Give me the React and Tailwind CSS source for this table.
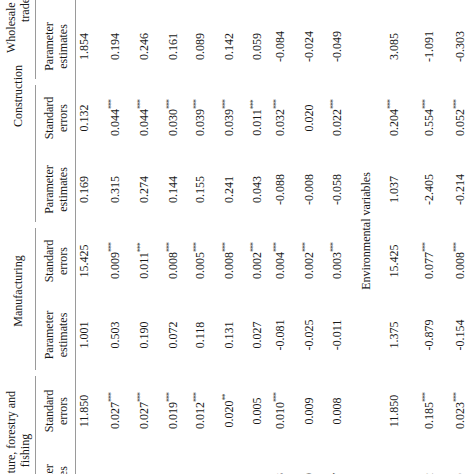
import React from 'react';

// table is laid out normally, then turned a quarter turn so it reads bottom-to-top
const cols = [
  { w: 'w-[79px]', head: ['Parameter', 'estimates'] },
  { w: 'w-[76px]', head: ['Standard', 'errors'] },
  { w: 'w-[76px]', head: ['Parameter', 'estimates'] },
  { w: 'w-[72px]', head: ['Standard', 'errors'] },
  { w: 'w-[71px]', head: ['Parameter', 'estimates'] },
  { w: 'w-[72px]', head: ['Standard', 'errors'] },
  { w: 'w-[71px]', head: ['Parameter', 'estimates'] },
  { w: 'w-[73px]', head: ['Standard', 'errors'] },
];

const rows = [
  { h: 'h-[31px]', v: ['1.128', '11.850', '1.001', '15.425', '0.169', '0.132', '1.854', '0.214'] },
  { h: 'h-[29px]', v: ['0.401', '0.027***', '0.503', '0.009***', '0.315', '0.044***', '0.194', '0.031***'] },
  { h: 'h-[29px]', v: ['0.176', '0.027***', '0.190', '0.011***', '0.274', '0.044***', '0.246', '0.030***'] },
  { h: 'h-[27px]', v: ['0.083', '0.019***', '0.072', '0.008***', '0.144', '0.030***', '0.161', '0.021***'] },
  { h: 'h-[29px]', v: ['0.095', '0.012***', '0.118', '0.005***', '0.155', '0.039***', '0.089', '0.013***'] },
  { h: 'h-[28px]', v: ['0.047', '0.020**', '0.131', '0.008***', '0.241', '0.039***', '0.142', '0.017***'] },
  { h: 'h-[23px]', v: ['0.012', '0.005', '0.027', '0.002***', '0.043', '0.011***', '0.059', '0.004***'] },
  { h: 'h-[29px]', v: ['-0.063', '0.010***', '-0.081', '0.004***', '-0.088', '0.032***', '-0.084', '0.009***'] },
  { h: 'h-[28px]', v: ['-0.019', '0.009', '-0.025', '0.002***', '-0.008', '0.020', '-0.024', '0.003***'] },
  { h: 'h-[29px]', v: ['-0.027', '0.008', '-0.011', '0.003***', '-0.058', '0.022***', '-0.049', '0.005***'] },
  { env: true },
  { h: 'h-[35px]', v: ['1.266', '11.850', '1.375', '15.425', '1.037', '0.204***', '3.085', '0.287***'] },
  { h: 'h-[31px]', v: ['-0.742', '0.185***', '-0.879', '0.077***', '-2.405', '0.554***', '-1.091', '0.098***'] },
  { h: 'h-[30px]', v: ['-0.119', '0.023***', '-0.154', '0.008***', '-0.214', '0.052***', '-0.303', '0.011***'] },
];

const Num = ({ v }) => {
  const m = v.match(/^(.*?)(\*+)$/);
  if (!m) return <span>{v}</span>;
  return (
    <span>
      {m[1]}
      <sup className="text-[8px] tracking-[-1px] top-[-5px]">{m[2]}</sup>
    </span>
  );
};

export default function App() {
  return (
    <div className="w-[474px] h-[474px] overflow-hidden bg-white">
      <div
        className="w-[686px] h-[490px] origin-top-left -rotate-90 translate-y-[624px] flex flex-col text-[12px] leading-[14px] text-[#181818]"
        style={{ fontFamily: '"Liberation Serif", "Times New Roman", serif' }}
      >
        {/* group titles */}
        <div className="flex h-[35px] items-center whitespace-nowrap">
          <div className="w-[96px] shrink-0" />
          <div className="w-[155px] shrink-0 text-center">
            <div>Agriculture, forestry and</div>
            <div>fishing</div>
          </div>
          <div className="w-[164px] shrink-0 text-center">Manufacturing</div>
          <div className="w-[156px] shrink-0 text-right pr-[12px]">Construction</div>
          <div className="w-[115px] shrink-0">
            <div>Wholesale and retail</div>
            <div className="pl-[31px]">trade</div>
          </div>
        </div>

        {/* group rules */}
        <div className="flex h-px">
          <div className="w-[96px] shrink-0" />
          <div className="w-[155px] shrink-0 px-[3px]"><div className="h-px bg-[#9a9a9a]" /></div>
          <div className="w-[148px] shrink-0 px-[3px]"><div className="h-px bg-[#9a9a9a]" /></div>
          <div className="w-[143px] shrink-0 px-[3px]"><div className="h-px bg-[#9a9a9a]" /></div>
          <div className="w-[144px] shrink-0 px-[3px]"><div className="h-px bg-[#9a9a9a]" /></div>
        </div>

        {/* sub headers */}
        <div className="flex h-[39px] items-center">
          <div className="w-[96px] shrink-0" />
          {cols.map((c, i) => (
            <div key={i} className={`${c.w} shrink-0 text-center`}>
              <div>{c.head[0]}</div>
              <div>{c.head[1]}</div>
            </div>
          ))}
        </div>

        <div className="h-px bg-[#9a9a9a]" />

        {rows.map((r, i) =>
          r.env ? (
            <div key={i} className="h-[28px] pt-px pl-[100px] text-center">
              Environmental variables
            </div>
          ) : (
            <div key={i} className={`flex ${r.h} pt-px`}>
              <div className="w-[96px] shrink-0" />
              {r.v.map((v, j) => (
                <div key={j} className={`${cols[j].w} shrink-0 text-center whitespace-nowrap`}>
                  <Num v={v} />
                </div>
              ))}
            </div>
          )
        )}
      </div>
    </div>
  );
}
